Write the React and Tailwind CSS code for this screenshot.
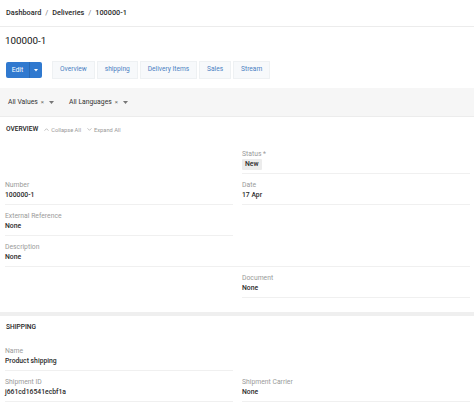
import React from "react";

function Field({ label, value, badge, wide }) {
  return (
    <div className={wide ? "col-span-2 h-[31px] border-b border-[#f0f0f0] pt-[6px]" : "h-[31px] border-b border-[#f0f0f0] pt-[6px]"}>
      <div className="h-[10px] leading-[10px] text-[6.8px] text-[#9a9a9a]">{label}</div>
      {badge ? (
        <div className="h-[11px] flex">
          <span className="h-[11px] leading-[11px] px-[3px] bg-[#ececec] rounded-[1px] text-[6.8px] font-medium text-[#2a2a2a]">{value}</span>
        </div>
      ) : (
        <div className="h-[11px] leading-[11px] text-[6.8px] font-medium text-[#2a2a2a]">{value}</div>
      )}
    </div>
  );
}

function Empty() {
  return <div className="h-[31px]" />;
}

function Tab({ children }) {
  return (
    <div className="h-[18px] px-[7px] flex items-center bg-[#f7f9fb] border border-[#eef1f3] text-[6.6px] text-[#4a7fc2]">
      {children}
    </div>
  );
}

function Chip({ children }) {
  return (
    <div className="flex items-center text-[6.8px] text-[#333]">
      <span>{children}</span>
      <span className="ml-[3px] leading-[6px] text-[6px] text-[#666]">×</span>
      <svg className="ml-[5px]" width="5" height="3" viewBox="0 0 5 3"><path d="M0 0 L5 0 L2.5 3 Z" fill="#777" /></svg>
    </div>
  );
}

export default function App() {
  return (
    <div className="w-[474px] h-[407px] overflow-hidden bg-white font-['Roboto',sans-serif] text-[#222]">
      <div className="h-[27px] border-b border-[#ececec] flex items-center px-[6px] text-[7.3px] font-medium text-[#2a2a2a]">
        <span>Dashboard</span>
        <span className="mx-[4px] font-normal text-[#777]">/</span>
        <span>Deliveries</span>
        <span className="mx-[4px] font-normal text-[#777]">/</span>
        <span>100000-1</span>
      </div>
      <div className="h-[29px] flex items-center px-[5px] text-[9.8px] text-[#111]">100000-1</div>
      <div className="pt-[5px] px-[6px] flex items-center">
        <div className="h-[16px] w-[36px] flex items-center bg-[#3079cf] rounded-[2px] text-white">
          <span className="w-[23px] text-center text-[6.8px]">Edit</span>
          <span className="w-px h-full bg-[#2869b5]" />
          <span className="flex-1 flex justify-center">
            <svg width="4" height="3" viewBox="0 0 4 3"><path d="M0 0 L4 0 L2 2.5 Z" fill="#fff" /></svg>
          </span>
        </div>
        <div className="ml-[10px] flex gap-[2px]">
          <Tab>Overview</Tab>
          <Tab>shipping</Tab>
          <Tab>Delivery Items</Tab>
          <Tab>Sales</Tab>
          <Tab>Stream</Tab>
        </div>
      </div>
      <div className="mt-[9px] h-[29px] bg-[#f6f6f6] border-b border-[#ececec] flex items-center px-[8px] gap-[15px]">
        <Chip>All Values</Chip>
        <Chip>All Languages</Chip>
      </div>
      <div className="h-[26px] flex items-center px-[6px]">
        <span className="text-[6.6px] font-medium text-[#222]">OVERVIEW</span>
        <span className="ml-[6px] flex items-center text-[5.7px] text-[#999]">
          <svg width="5" height="3" viewBox="0 0 5 3" className="mr-[2px]"><path d="M0.5 2.7 L2.5 0.7 L4.5 2.7" fill="none" stroke="#999" strokeWidth="0.6" /></svg>
          Collapse All
        </span>
        <span className="ml-[6px] flex items-center text-[5.7px] text-[#999]">
          <svg width="5" height="3" viewBox="0 0 5 3" className="mr-[2px]"><path d="M0.5 0.3 L2.5 2.3 L4.5 0.3" fill="none" stroke="#999" strokeWidth="0.6" /></svg>
          Expand All
        </span>
      </div>
      <div className="grid grid-cols-2 gap-x-[9px] pl-[5px] pr-[4px]">
        <Empty />
        <Field label="Status *" value="New" badge />
        <Field label="Number" value="100000-1" />
        <Field label="Date" value="17 Apr" />
        <Field label="External Reference" value="None" />
        <Empty />
        <Field label="Description" value="None" wide />
        <Empty />
        <Field label="Document" value="None" />
      </div>
      <div className="mt-[14px] h-[4px] bg-[#efefef]" />
      <div className="h-[24px] flex items-center px-[6px] text-[6.6px] font-medium text-[#222]">SHIPPING</div>
      <div className="grid grid-cols-2 gap-x-[9px] pl-[5px] pr-[4px]">
        <Field label="Name" value="Product shipping" />
        <Empty />
        <Field label="Shipment ID" value="j661cd16541ecbf1a" />
        <Field label="Shipment Carrier" value="None" />
      </div>
    </div>
  );
}
